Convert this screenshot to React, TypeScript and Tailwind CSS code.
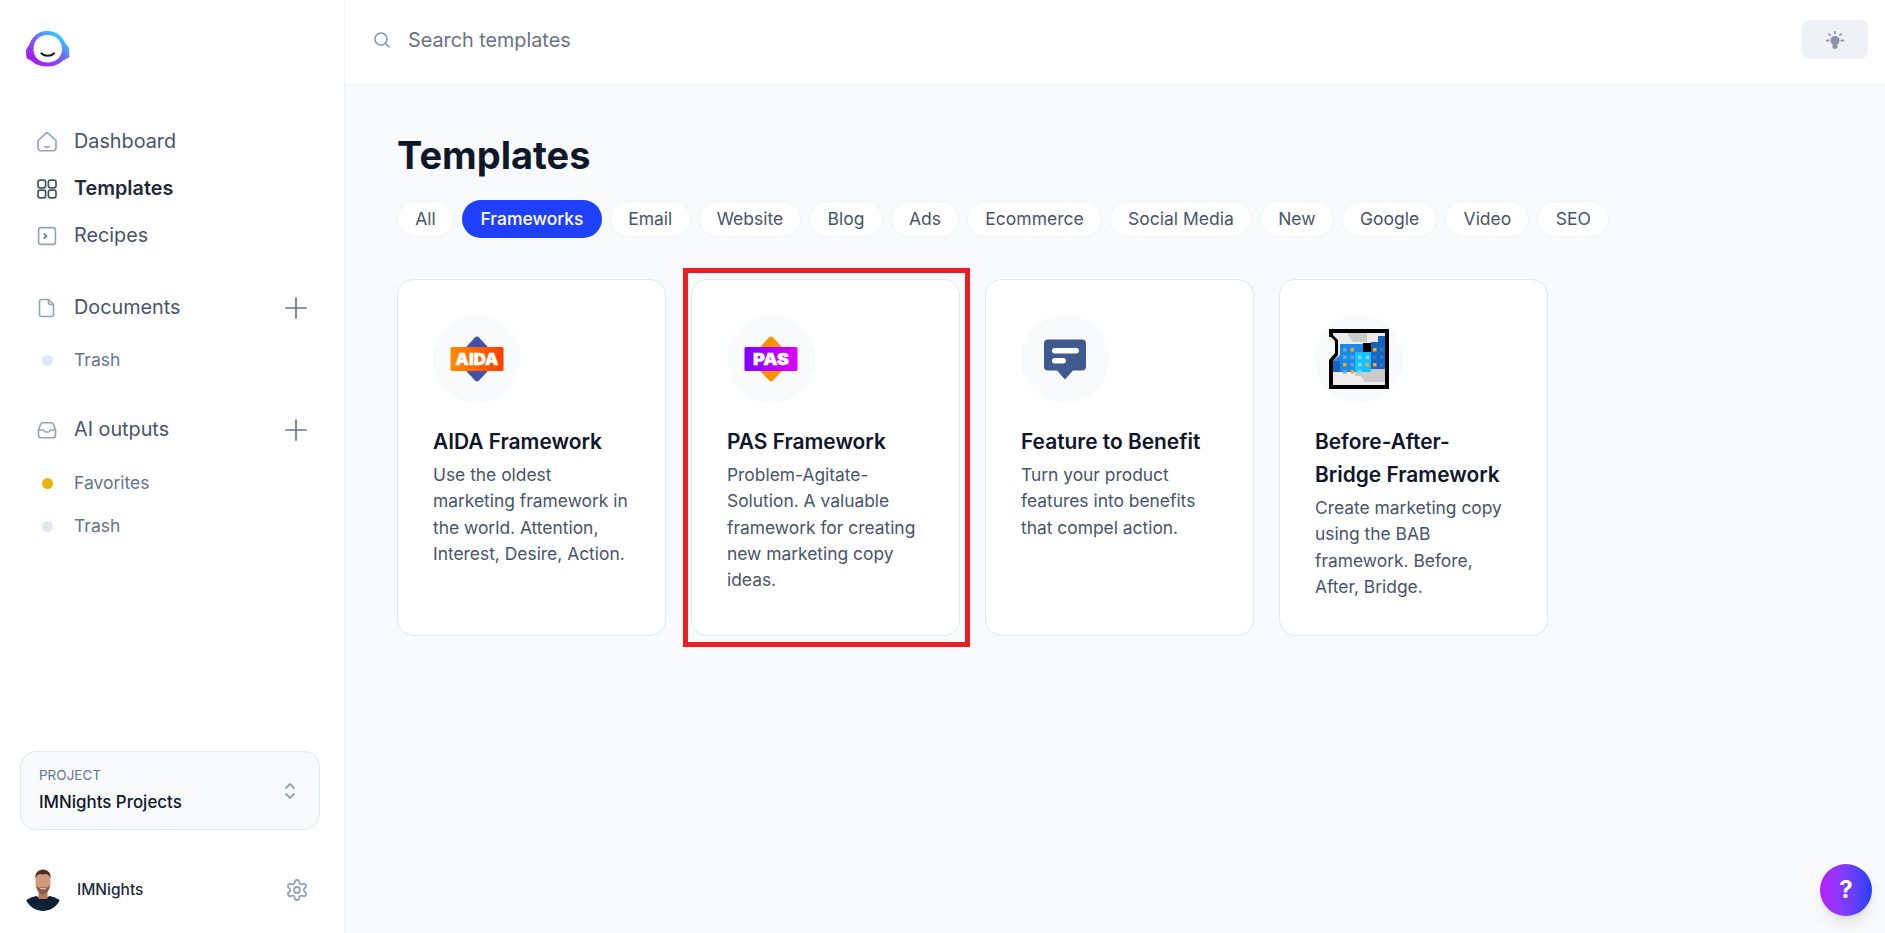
import React from "react";

const font = { fontFamily: "Inter, 'Noto Sans', sans-serif" };

function HomeIcon() {
  return (
    <svg width="22" height="22" viewBox="0 0 22 22" fill="none" stroke="#94a3b8" strokeWidth="1.6" strokeLinejoin="round" strokeLinecap="round">
      <path d="M2 9.5 9.6 2.6a2 2 0 0 1 2.8 0L20 9.5v7.2a3 3 0 0 1-3 3H5a3 3 0 0 1-3-3z" />
      <path d="M8.8 15.6c1.4.7 3 .7 4.4 0" />
    </svg>
  );
}
function GridIcon() {
  return (
    <svg width="22" height="22" viewBox="0 0 22 22" fill="none" stroke="#475569" strokeWidth="1.7">
      <rect x="2" y="2.2" width="7.6" height="7.6" rx="2" />
      <rect x="12.4" y="2.2" width="7.6" height="7.6" rx="2" />
      <rect x="2" y="12.2" width="7.6" height="7.6" rx="2" />
      <rect x="12.4" y="12.2" width="7.6" height="7.6" rx="2" />
    </svg>
  );
}
function RecipeIcon() {
  return (
    <svg width="22" height="22" viewBox="0 0 22 22" fill="none" stroke="#94a3b8" strokeWidth="1.6" strokeLinejoin="round" strokeLinecap="round">
      <rect x="2.6" y="2.6" width="16.8" height="16.8" rx="2.4" />
      <path d="m8.2 9 2.4 2.1-2.4 2.1" stroke="#64748b" />
    </svg>
  );
}
function FileIcon() {
  return (
    <svg width="22" height="22" viewBox="0 0 22 22" fill="none" stroke="#94a3b8" strokeWidth="1.6" strokeLinejoin="round">
      <path d="M5.5 2.5h7l5 5v10a2 2 0 0 1-2 2h-10a2 2 0 0 1-2-2v-13a2 2 0 0 1 2-2z" />
      <path d="M12.5 2.5v3a2 2 0 0 0 2 2h3" />
    </svg>
  );
}
function InboxIcon() {
  return (
    <svg width="22" height="22" viewBox="0 0 22 22" fill="none" stroke="#94a3b8" strokeWidth="1.6" strokeLinejoin="round" strokeLinecap="round">
      <path d="M2.5 11 4.6 5.4A2.5 2.5 0 0 1 7 3.8h8a2.5 2.5 0 0 1 2.4 1.6L19.5 11v5.2a2.6 2.6 0 0 1-2.6 2.6H5.1a2.6 2.6 0 0 1-2.6-2.6z" />
      <path d="M2.5 11H7c1 0 1.2 2 2.5 2h3c1.3 0 1.5-2 2.5-2h4.5" />
    </svg>
  );
}
function Plus() {
  return (
    <svg width="22" height="22" viewBox="0 0 22 22" fill="none" stroke="#64748b" strokeWidth="1.7" strokeLinecap="round">
      <path d="M11 1v20M1 11h20" />
    </svg>
  );
}
function Logo() {
  return (
    <svg width="44" height="36" viewBox="0 0 44 36">
      <defs>
        <linearGradient id="lg" x1="0.15" y1="0.8" x2="0.8" y2="0.05">
          <stop offset="0" stopColor="#a21ff0" />
          <stop offset="0.45" stopColor="#7a5cf5" />
          <stop offset="1" stopColor="#22d8ff" />
        </linearGradient>
      </defs>
      <path
        d="M21 .5C29 .5 35 4 38 11l4.5 6 .5 9-6 3c-4 4-9 6-15.500 6S9 33 5 29l-4-2-.5-8L4 13C7 5 13 .5 21 .5z"
        fill="url(#lg)"
        stroke="url(#lg)"
        strokeWidth="1"
        strokeLinejoin="round"
      />
      <path d="M7.5 18C7.5 10 13 4 21.5 4S36 10 36 18c0 8-6 13.500-14.500 13.500S7.5 26 7.5 18z" fill="#fff" />
      <path d="M15.5 22.500c3.500 3 9 3 12.500 0" fill="none" stroke="#111827" strokeWidth="2.2" strokeLinecap="round" />
    </svg>
  );
}
function Avatar() {
  return (
    <svg width="38" height="42" viewBox="0 0 38 42">
      <defs>
        <clipPath id="av"><circle cx="19" cy="23.5" r="18.5" /></clipPath>
      </defs>
      <g clipPath="url(#av)">
        <path d="M0 42V34c2-4 8-6 12-7l7 3 7-3c4 1 10 3 12 7v8z" fill="#0d2136" />
      </g>
      <rect x="14.5" y="20" width="9" height="10" fill="#b57a5c" />
      <path d="M11.500 7c0-4 3.500-6 7.500-6s7.500 2 7.500 6v7c0 6-3.500 11-7.500 11s-7.500-5-7.500-11z" fill="#d09a7c" />
      <path d="M11.500 9c-.5-5 3.500-8.500 7.500-8.500s8 3.500 7.500 8.500c-1-2.500-2.500-3.500-4-4-2 .5-5 .5-7 0-1.500.5-3 1.500-4 4z" fill="#4a2e1e" />
      <path d="M11.800 15c.7 6 3.700 10.500 7.200 10.500s6.500-4.500 7.200-10.500c-.8 2-1.700 3.500-3.500 3.500-2.500-.5-4.800-.5-7.400 0-1.800 0-2.700-1.500-3.500-3.500z" fill="#8a5f47" />
      <path d="M15.5 18.500c2.200 1.400 4.800 1.400 7 0-.4 2.400-6.600 2.400-7 0z" fill="#fff" />
    </svg>
  );
}

function NavRow({ icon, label, active }: { icon: React.ReactNode; label: string; active?: boolean }) {
  return (
    <div className="flex h-[47px] items-center">
      <div className="flex w-[22px] justify-center">{icon}</div>
      <span className={active ? "ml-[16px] text-[19.8px] font-semibold text-[#1e293b]" : "ml-[16px] text-[19.8px] text-[#475569]"}>{label}</span>
    </div>
  );
}
function SectionRow({ icon, label }: { icon: React.ReactNode; label: string }) {
  return (
    <div className="flex h-[47px] items-center justify-between pr-[8px]">
      <div className="flex items-center">
        <div className="flex w-[22px] justify-center">{icon}</div>
        <span className="ml-[16px] text-[19.8px] text-[#475569]">{label}</span>
      </div>
      <Plus />
    </div>
  );
}
function SubRow({ label, dot }: { label: string; dot: string }) {
  return (
    <div className="flex h-[44px] items-center">
      <div className="flex w-[22px] justify-center">
        <span className={dot === "y" ? "h-[11px] w-[11px] rounded-full bg-[#eab308]" : "h-[11px] w-[11px] rounded-full bg-[#e2e8f0]"} />
      </div>
      <span className="ml-[16px] text-[17.5px] text-[#64748b]">{label}</span>
    </div>
  );
}

const chips = ["All", "Frameworks", "Email", "Website", "Blog", "Ads", "Ecommerce", "Social Media", "New", "Google", "Video", "SEO"];

function AidaIcon() {
  return (
    <svg width="56" height="50" viewBox="0 -1 56 50">
      <defs>
        <linearGradient id="aida" x1="0" x2="1" y1="0" y2="0">
          <stop offset="0" stopColor="#ff8c00" />
          <stop offset="1" stopColor="#ff3d00" />
        </linearGradient>
      </defs>
      <path d="M26 2.5a2.8 2.8 0 0 1 4 0L50 24 30 45.5a2.8 2.8 0 0 1-4 0L6 24z" fill="#3f51a8" />
      <rect x="1.5" y="12" width="53" height="24" rx="1.5" fill="url(#aida)" />
      <text x="28" y="30" textAnchor="middle" textLength="43" lengthAdjust="spacingAndGlyphs" fontFamily="Inter, sans-serif" fontWeight="900" fontSize="16.5" fill="#fff" stroke="#fff" strokeWidth="0.4">AIDA</text>
    </svg>
  );
}
function PasIcon() {
  return (
    <svg width="56" height="50" viewBox="0 -1 56 50">
      <defs>
        <linearGradient id="pas" x1="0" x2="1" y1="0" y2="0">
          <stop offset="0" stopColor="#7f00ff" />
          <stop offset="1" stopColor="#e100ff" />
        </linearGradient>
      </defs>
      <path d="M26 2.5a2.8 2.8 0 0 1 4 0L50 24 30 45.5a2.8 2.8 0 0 1-4 0L6 24z" fill="#ff9100" />
      <rect x="1.5" y="12" width="53" height="24" rx="1.5" fill="url(#pas)" />
      <text x="28" y="30" textAnchor="middle" textLength="36" lengthAdjust="spacingAndGlyphs" fontFamily="Inter, sans-serif" fontWeight="900" fontSize="16.5" fill="#fff" stroke="#fff" strokeWidth="0.4">PAS</text>
    </svg>
  );
}
function FeatureIcon() {
  return (
    <svg width="44" height="41" viewBox="0 0 44 41">
      <path d="M5 .5h34a4 4 0 0 1 4 4v23a4 4 0 0 1-4 4h-9l-8 9-8-9H5a4 4 0 0 1-4-4v-23a4 4 0 0 1 4-4z" fill="#40598f" />
      <rect x="9" y="9" width="27" height="5.5" rx="2.7" fill="#fff" />
      <rect x="9" y="19" width="14" height="5.5" rx="2.7" fill="#fff" />
    </svg>
  );
}
function BabIcon() {
  const cols = [14, 21.5, 29, 36.5, 44, 51];
  const rows = [19, 26.5, 34, 41];
  const orange = ["21.5-19", "44-19", "14-34", "36.5-34", "44-34", "21.5-41"];
  const skip = ["44-41", "51-41", "36.5-41", "29-19", "36.5-19"];
  return (
    <svg width="60" height="60" viewBox="0 0 60 60">
      <path d="M0 0H60V60H0V31L6 24V12L2 8H0z" fill="#000" />
      <path d="M4 4H56V56H4V32L9 26V11L4 6z" fill="#ececec" />
      <path d="M18 4H38V13H24z" fill="#cbcbcb" />
      <path d="M42 13H49V7H56V40H42z" fill="#1565c0" />
      <path d="M34 14H42V26H34z" fill="#000" />
      <path d="M11 15H34V43H4V32L11 26z" fill="#1e88e5" />
      <path d="M4 32H11V43H4z" fill="#1565c0" />
      <path d="M26 23H42V44H26z" fill="#18c0ff" />
      <path d="M4 43H56V56H4z" fill="#ececec" />
      <path d="M26 43H56V53H36L32 47H26z" fill="#cbcbcb" />
      <path d="M42 40H56V44H42z" fill="#cbcbcb" />
      {rows.map((y) =>
        cols.map((x) => {
          const key = `${x}-${y}`;
          if (skip.includes(key)) return null;
          const fill = orange.includes(key) ? "#f4a91f" : x >= 44 ? "#2a7fd0" : x >= 29 && y > 19 ? "#6fe0ff" : "#5aa9e6";
          return <rect key={key} x={x} y={y} width="3.5" height="3.5" fill={fill} />;
        })
      )}
    </svg>
  );
}

function Card({ icon, title, desc, marked }: { icon: React.ReactNode; title: string; desc: string; marked?: boolean }) {
  return (
    <div className="relative h-[357px] rounded-[16px] border border-[#e2e8f0] bg-white p-[35px]">
      <div className="flex h-[88px] w-[88px] items-center justify-center rounded-full bg-[#f9fafc]">{icon}</div>
      <h3 className="mt-[22px] text-[20.9px] font-semibold leading-[33px] text-[#0f172a]">{title}</h3>
      <p className="mt-[3.7px] text-[17.4px] leading-[26.4px] text-[#475569]">{desc}</p>
      {marked && (
        <div className="pointer-events-none absolute -top-[12px] -bottom-[12px] -left-[9px] -right-[11px] border-[5px] border-[#ee1c25]" />
      )}
    </div>
  );
}

export default function App() {
  return (
    <div className="relative flex h-[933px] w-full overflow-hidden bg-[#f9fafc]" style={font}>
      <aside className="flex w-[345px] shrink-0 flex-col border-r border-[#f1f3f8] bg-white">
        <div className="pl-[26px] pt-[31px]">
          <Logo />
        </div>
        <nav className="mt-[51.5px] pl-[36px] pr-[29px]">
          <NavRow icon={<HomeIcon />} label="Dashboard" />
          <NavRow icon={<GridIcon />} label="Templates" active />
          <NavRow icon={<RecipeIcon />} label="Recipes" />
          <div className="mt-[25px]">
            <SectionRow icon={<FileIcon />} label="Documents" />
            <div className="mt-[6.5px]">
              <SubRow label="Trash" dot="g" />
            </div>
          </div>
          <div className="mt-[24.5px]">
            <SectionRow icon={<InboxIcon />} label="AI outputs" />
            <div className="mt-[7.5px]">
              <SubRow label="Favorites" dot="y" />
              <div className="-mt-[1px]">
                <SubRow label="Trash" dot="g" />
              </div>
            </div>
          </div>
        </nav>
        <div className="mt-auto pb-[22px] pl-[20px] pr-[24px]">
          <div className="flex h-[79px] items-center justify-between rounded-[16px] border border-[#e2e8f0] bg-[#f8fafc] pl-[18px] pr-[22px]">
            <div className="-mt-[1.5px]">
              <div className="text-[13.5px] leading-[18px] text-[#64748b]">PROJECT</div>
              <div className="mt-[5.5px] text-[16.9px] font-medium leading-[24px] text-[#0f172a]">IMNights Projects</div>
            </div>
            <svg width="14" height="18" viewBox="0 0 14 18" fill="none" stroke="#94a3b8" strokeWidth="1.8" strokeLinecap="round" strokeLinejoin="round">
              <path d="m3 6 4-4 4 4M3 12l4 4 4-4" />
            </svg>
          </div>
          <div className="mt-[39px] flex h-[42px] items-center justify-between pl-[4px] pr-[11px]">
            <div className="flex items-center">
              <Avatar />
              <span className="ml-[15px] text-[15.5px] font-medium text-[#1e293b]">IMNights</span>
            </div>
            <svg width="24" height="24" viewBox="0 0 24 24" fill="none" stroke="#94a3b8" strokeWidth="1.8" strokeLinecap="round" strokeLinejoin="round">
              <path d="M12.22 2h-.44a2 2 0 0 0-2 2v.18a2 2 0 0 1-1 1.73l-.43.25a2 2 0 0 1-2 0l-.15-.08a2 2 0 0 0-2.73.73l-.22.38a2 2 0 0 0 .73 2.73l.15.1a2 2 0 0 1 1 1.72v.51a2 2 0 0 1-1 1.74l-.15.09a2 2 0 0 0-.73 2.73l.22.38a2 2 0 0 0 2.73.73l.15-.08a2 2 0 0 1 2 0l.43.25a2 2 0 0 1 1 1.73V20a2 2 0 0 0 2 2h.44a2 2 0 0 0 2-2v-.18a2 2 0 0 1 1-1.73l.43-.25a2 2 0 0 1 2 0l.15.08a2 2 0 0 0 2.73-.73l.22-.39a2 2 0 0 0-.73-2.73l-.15-.08a2 2 0 0 1-1-1.74v-.5a2 2 0 0 1 1-1.74l.15-.09a2 2 0 0 0 .73-2.73l-.22-.38a2 2 0 0 0-2.73-.73l-.15.08a2 2 0 0 1-2 0l-.43-.25a2 2 0 0 1-1-1.73V4a2 2 0 0 0-2-2z" />
              <circle cx="12" cy="12" r="3" />
            </svg>
          </div>
        </div>
      </aside>

      <div className="flex min-w-0 flex-1 flex-col">
        <header className="flex h-[85px] shrink-0 items-center justify-between border-b border-[#f1f3f8] bg-white pb-[5px] pl-[28px] pr-[17px]">
          <div className="flex items-center">
            <svg width="18" height="18" viewBox="0 0 18 18" fill="none" stroke="#8a94a6" strokeWidth="1.5" strokeLinecap="round">
              <circle cx="8" cy="8" r="6" />
              <path d="m12.5 12.5 3.5 3.5" />
            </svg>
            <span className="ml-[17px] mt-[2px] text-[19.8px] text-[#6b7280]">Search templates</span>
          </div>
          <div className="flex h-[39px] w-[66px] items-center justify-center rounded-[8px] bg-[#eef1f6]">
            <svg width="18" height="18" viewBox="0 0 18 18" fill="none" stroke="#8b93a5" strokeWidth="1.8" strokeLinecap="round">
              <circle cx="9" cy="9.5" r="4.6" fill="#8b93a5" stroke="none" />
              <path d="M6.5 13.5h5v2.8a1.5 1.5 0 0 1-1.5 1.5H8a1.5 1.5 0 0 1-1.5-1.5z" fill="#8b93a5" stroke="none" />
              <path d="M9 .8v1.6M3 3.2l1 1M15 3.200l-1 1M.8 9.5h1.8M15.4 9.5h1.8" />
            </svg>
          </div>
        </header>
        <main className="px-[52px] pt-[50px]">
          <h1 className="text-[38px] font-bold leading-[40px] text-[#0f172a]">Templates</h1>
          <div className="mt-[25px] flex items-center gap-[8px]">
            {chips.map((c) =>
              c === "Frameworks" ? (
                <span key={c} className="flex h-[38px] items-center rounded-full bg-[#1f41ff] px-[18.5px] text-[17.5px] font-medium text-white">
                  {c}
                </span>
              ) : (
                <span key={c} className="flex h-[36px] items-center rounded-full border border-[#f1f3f8] bg-white px-[17.2px] text-[17.5px] text-[#475569]">
                  {c}
                </span>
              )
            )}
          </div>
          <div className="mt-[41px] grid w-[1151px] grid-cols-[269px_269px_269px_269px] gap-[25px]">
            <Card icon={<AidaIcon />} title="AIDA Framework" desc="Use the oldest marketing framework in the world. Attention, Interest, Desire, Action." />
            <Card icon={<PasIcon />} title="PAS Framework" desc="Problem-Agitate-Solution. A valuable framework for creating new marketing copy ideas." marked />
            <Card icon={<FeatureIcon />} title="Feature to Benefit" desc="Turn your product features into benefits that compel action." />
            <Card icon={<BabIcon />} title="Before-After-Bridge Framework" desc="Create marketing copy using the BAB framework. Before, After, Bridge." />
          </div>
        </main>
      </div>

      <div className="absolute bottom-[17px] right-[13px] flex h-[52px] w-[52px] items-center justify-center rounded-full bg-gradient-to-r from-[#b81bf5] to-[#1e40ff] text-[24px] font-bold text-white shadow-lg">
        ?
      </div>
    </div>
  );
}
